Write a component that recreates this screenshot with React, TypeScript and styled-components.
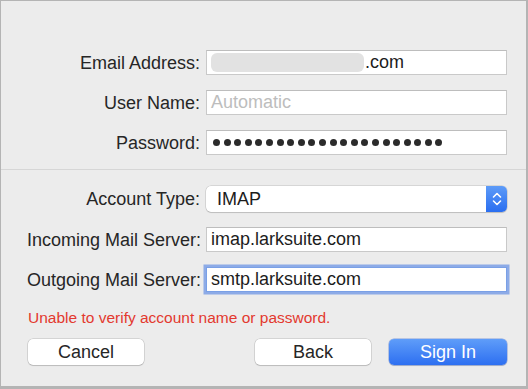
import React from "react";
import styled, { createGlobalStyle } from "styled-components";

const GlobalStyle = createGlobalStyle`
  html, body {
    margin: 0;
    padding: 0;
    background: #ececec;
  }
  * {
    box-sizing: border-box;
  }
`;

const Window = styled.div`
  width: 528px;
  height: 389px;
  background: #ececec;
  border: 1px solid #b4b4b4;
  border-bottom-width: 3px;
  border-right-width: 2px;
  font-family: "Liberation Sans", Arial, sans-serif;
  color: #262626;
  display: flex;
  flex-direction: column;
`;

const Section = styled.div<{ $top: number }>`
  display: grid;
  grid-template-columns: 173px 301px;
  column-gap: 6px;
  row-gap: 15px;
  padding: ${(p) => p.$top}px 0 0 26px;
  align-items: center;
`;

const Label = styled.div`
  font-size: 18px;
  line-height: 20px;
  text-align: right;
  white-space: nowrap;
`;

const Field = styled.div<{ $focus?: boolean }>`
  height: 25px;
  background: #fff;
  border: 1px solid ${(p) => (p.$focus ? "#7aa0e6" : "#c9c9c9")};
  border-top-color: ${(p) => (p.$focus ? "#7aa0e6" : "#bdbdbd")};
  box-shadow: ${(p) =>
    p.$focus ? "0 0 0 2.5px rgba(110, 150, 230, 0.75)" : "none"};
  display: flex;
  align-items: center;
  padding: 0 4px;
  font-size: 18px;
  color: #1c1c1c;
`;

const Placeholder = styled.span`
  color: #bdbdbd;
`;

const Blurred = styled.span`
  width: 153px;
  height: 19px;
  border-radius: 6px;
  background: #e2e2e2;
  margin-right: 1px;
`;

const Dots = styled.div`
  display: flex;
  gap: 3.6px;
  padding-left: 2px;
`;

const Dot = styled.span`
  width: 7px;
  height: 7px;
  border-radius: 50%;
  background: #2b2b2b;
`;

const Divider = styled.div`
  height: 1px;
  background: #d6d6d6;
  margin-top: 14px;
`;

const Select = styled.div`
  height: 26px;
  background: #fff;
  border-radius: 5px;
  box-shadow: 0 0 0 0.5px rgba(0, 0, 0, 0.18), 0 1px 1px rgba(0, 0, 0, 0.12);
  display: flex;
  align-items: center;
  justify-content: space-between;
  font-size: 18px;
  padding-left: 11px;
  color: #1c1c1c;
`;

const Stepper = styled.div`
  width: 21px;
  height: 26px;
  border-radius: 0 5px 5px 0;
  background: linear-gradient(#5d9bf8, #2a6ef0);
  display: flex;
  align-items: center;
  justify-content: center;
`;

const ErrorText = styled.div`
  color: #e3392f;
  font-size: 15.5px;
  line-height: 18px;
  padding: 17px 0 0 27px;
`;

const Buttons = styled.div`
  display: flex;
  padding: 12px 19px 0 27px;
  gap: 18px;
`;

const Button = styled.div<{ $primary?: boolean; $push?: boolean }>`
  width: ${(p) => (p.$primary ? 118 : 116)}px;
  height: 26px;
  border-radius: 5px;
  margin-left: ${(p) => (p.$push ? "auto" : "0")};
  display: flex;
  align-items: center;
  justify-content: center;
  font-size: 18px;
  color: ${(p) => (p.$primary ? "#fff" : "#262626")};
  background: ${(p) =>
    p.$primary ? "linear-gradient(#5f9df9, #2d6ff1)" : "#fff"};
  box-shadow: ${(p) =>
    p.$primary
      ? "0 0 0 0.5px rgba(30, 80, 200, 0.5), 0 1px 1px rgba(0, 0, 0, 0.15)"
      : "0 0 0 0.5px rgba(0, 0, 0, 0.2), 0 1px 1px rgba(0, 0, 0, 0.12)"};
`;

const StepperIcon = () => (
  <svg width="12" height="18" viewBox="0 0 12 18">
    <path
      d="M2.5 7 L6 3.5 L9.5 7 M2.5 11 L6 14.5 L9.5 11"
      fill="none"
      stroke="#fff"
      strokeWidth="1.6"
      strokeLinecap="round"
      strokeLinejoin="round"
    />
  </svg>
);

export default function App() {
  return (
    <>
      <GlobalStyle />
      <Window>
        <Section $top={49}>
          <Label>Email Address:</Label>
          <Field>
            <Blurred />
            .com
          </Field>
          <Label>User Name:</Label>
          <Field>
            <Placeholder>Automatic</Placeholder>
          </Field>
          <Label>Password:</Label>
          <Field>
            <Dots>
              {Array.from({ length: 22 }).map((_, i) => (
                <Dot key={i} />
              ))}
            </Dots>
          </Field>
        </Section>
        <Divider />
        <Section $top={16}>
          <Label>Account Type:</Label>
          <Select>
            IMAP
            <Stepper>
              <StepperIcon />
            </Stepper>
          </Select>
          <Label>Incoming Mail Server:</Label>
          <Field>imap.larksuite.com</Field>
          <Label>Outgoing Mail Server:</Label>
          <Field $focus>smtp.larksuite.com</Field>
        </Section>
        <ErrorText>Unable to verify account name or password.</ErrorText>
        <Buttons>
          <Button>Cancel</Button>
          <Button $push>Back</Button>
          <Button $primary>Sign In</Button>
        </Buttons>
      </Window>
    </>
  );
}
